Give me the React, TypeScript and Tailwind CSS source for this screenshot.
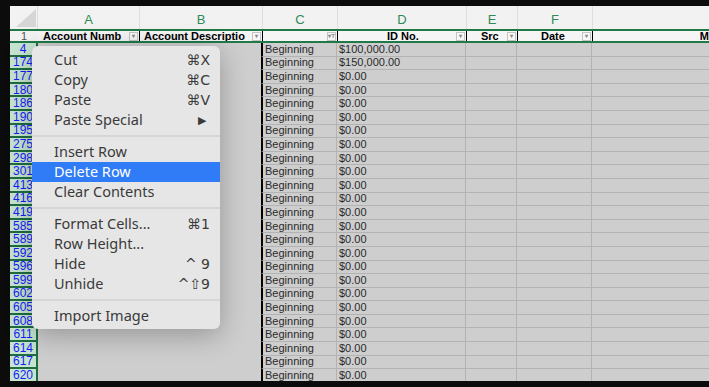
const rows = [4, 174, 177, 180, 186, 190, 195, 275, 298, 301, 413, 416, 419, 585, 589, 592, 596, 599, 602, 605, 608, 611, 614, 617, 620];

const cols = [
  { letter: "A", w: "w-[102px]" },
  { letter: "B", w: "w-[123px]" },
  { letter: "C", w: "w-[75px]" },
  { letter: "D", w: "w-[129px]" },
  { letter: "E", w: "w-[51px]" },
  { letter: "F", w: "w-[75px]" },
];

function DropBtn({ filter }: { filter?: boolean }) {
  return (
    <span className="ml-auto mr-[1px] flex h-[9px] w-[9px] shrink-0 items-center justify-center border border-[#c4c4c4] bg-[#f7f7f7] text-[6px] leading-none text-[#8a8a8a]">
      {filter ? "▾T" : "▾"}
    </span>
  );
}

type MenuItem = { label?: string; key?: string; sep?: boolean; active?: boolean };

const menu: MenuItem[] = [
  { label: "Cut", key: "⌘X" },
  { label: "Copy", key: "⌘C" },
  { label: "Paste", key: "⌘V" },
  { label: "Paste Special", key: "▶" },
  { sep: true },
  { label: "Insert Row" },
  { label: "Delete Row", active: true },
  { label: "Clear Contents" },
  { sep: true },
  { label: "Format Cells...", key: "⌘1" },
  { label: "Row Height..." },
  { label: "Hide", key: "^ 9" },
  { label: "Unhide", key: "^⇧9" },
  { sep: true },
  { label: "Import Image" },
];

function ContextMenu() {
  return (
    <div className="absolute left-[32px] top-[46px] w-[188px] rounded-[6px] bg-[#e6e6e6] pb-[3px] pt-[4px] shadow-[0_6px_28px_rgba(0,0,0,0.28)] font-['Noto_Sans',sans-serif]">
      {menu.map((m, i) =>
        m.sep ? (
          <div key={i} className="flex h-[12px] items-center">
            <div className="h-[2px] w-full bg-[#d6d6d6]" />
          </div>
        ) : (
          <div
            key={i}
            className={`flex h-[20px] items-center pl-[22px] pr-[10px] text-[14.5px] ${
              m.active ? "bg-[#2f7cf6] text-white" : "text-[#3a3a3a]"
            }`}
          >
            <span>{m.label}</span>
            {m.key && (
              <span className={`ml-auto ${m.key === "▶" ? "mr-[4px] text-[11px]" : "font-['DejaVu_Sans',sans-serif] text-[14px]"}`}>
                {m.key}
              </span>
            )}
          </div>
        )
      )}
    </div>
  );
}

export default function App() {
  return (
    <div className="relative h-[387px] w-[709px] overflow-hidden bg-[#0c0c0c] font-['Liberation_Sans',Arial,sans-serif]">
      <div className="h-[6px]" />
      <div className="ml-[10px] h-[375px] overflow-hidden bg-[#f2f2f2]">
        {/* Column letters */}
        <div className="flex h-[23px]">
          <div className="w-[28px] shrink-0 border-r border-[#dcdcdc]">
            <svg width="28" height="23" viewBox="0 0 28 23">
              <polygon points="26,3 26,21 6,21" fill="#d6d6d6" />
            </svg>
          </div>
          {cols.map((c) => (
            <div
              key={c.letter}
              className={`${c.w} shrink-0 border-r border-[#dedede] pt-[4px] text-center text-[13px] text-[#2f8a57]`}
            >
              {c.letter}
            </div>
          ))}
          <div className="flex-1" />
        </div>
        <div className="h-[2px] bg-[#1f7a47]" />
        {/* Header row 1 */}
        <div className="flex h-[10px] items-center text-[11px] font-bold leading-none text-black">
          <div className="w-[28px] shrink-0 text-center font-normal text-[#555]">1</div>
          <div className="flex h-full w-[102px] shrink-0 items-center overflow-hidden border-r border-black bg-[#f5f5f5] pl-[5px]">
            <span className="whitespace-nowrap">Account Numb</span>
            <DropBtn />
          </div>
          <div className="flex h-full w-[123px] shrink-0 items-center overflow-hidden border-r border-black bg-[#f5f5f5] pl-[4px]">
            <span className="whitespace-nowrap">Account Descriptio</span>
            <DropBtn />
          </div>
          <div className="flex h-full w-[75px] shrink-0 items-center border-r border-black bg-[#f5f5f5]">
            <DropBtn filter />
          </div>
          <div className="relative flex h-full w-[129px] shrink-0 items-center border-r border-black bg-[#f5f5f5]">
            <span className="absolute left-[49px]">ID No.</span>
            <DropBtn />
          </div>
          <div className="relative flex h-full w-[51px] shrink-0 items-center border-r border-black bg-[#f5f5f5]">
            <span className="absolute left-[14px]">Src</span>
            <DropBtn />
          </div>
          <div className="relative flex h-full w-[75px] shrink-0 items-center border-r border-black bg-[#f5f5f5]">
            <span className="absolute left-[23px]">Date</span>
            <DropBtn />
          </div>
          <div className="flex h-full flex-1 items-center justify-end bg-[#f5f5f5]">M</div>
        </div>
        <div className="h-[2px] bg-[#1f7a47]" />
        {/* Data rows */}
        <div className="bg-[#cecece]">
          {rows.map((r, i) => (
            <div key={r} className="flex h-[13.6px] text-[11px] leading-none text-[#2a2a2a]">
              <div className="flex w-[28px] shrink-0 items-center justify-center border-b-2 border-r-2 border-[#1e6e41] bg-[#c6e5d0] text-[12px] text-[#1a1aff]">
                {r}
              </div>
              <div className="w-[223px] shrink-0" />
              <div className="flex w-[75px] shrink-0 items-center border-b border-l-2 border-[#b3b3b3] border-l-black pl-[2px]">
                Beginning
              </div>
              <div className="flex w-[129px] shrink-0 items-center border-b border-l border-[#b3b3b3] pl-[2px]">
                {i === 0 ? "$100,000.00" : i === 1 ? "$150,000.00" : "$0.00"}
              </div>
              <div className="w-[51px] shrink-0 border-b border-l border-[#b3b3b3]" />
              <div className="w-[75px] shrink-0 border-b border-l border-[#b3b3b3]" />
              <div className="flex-1 border-b border-l border-[#b3b3b3]" />
            </div>
          ))}
        </div>
      </div>
      <ContextMenu />
    </div>
  );
}
